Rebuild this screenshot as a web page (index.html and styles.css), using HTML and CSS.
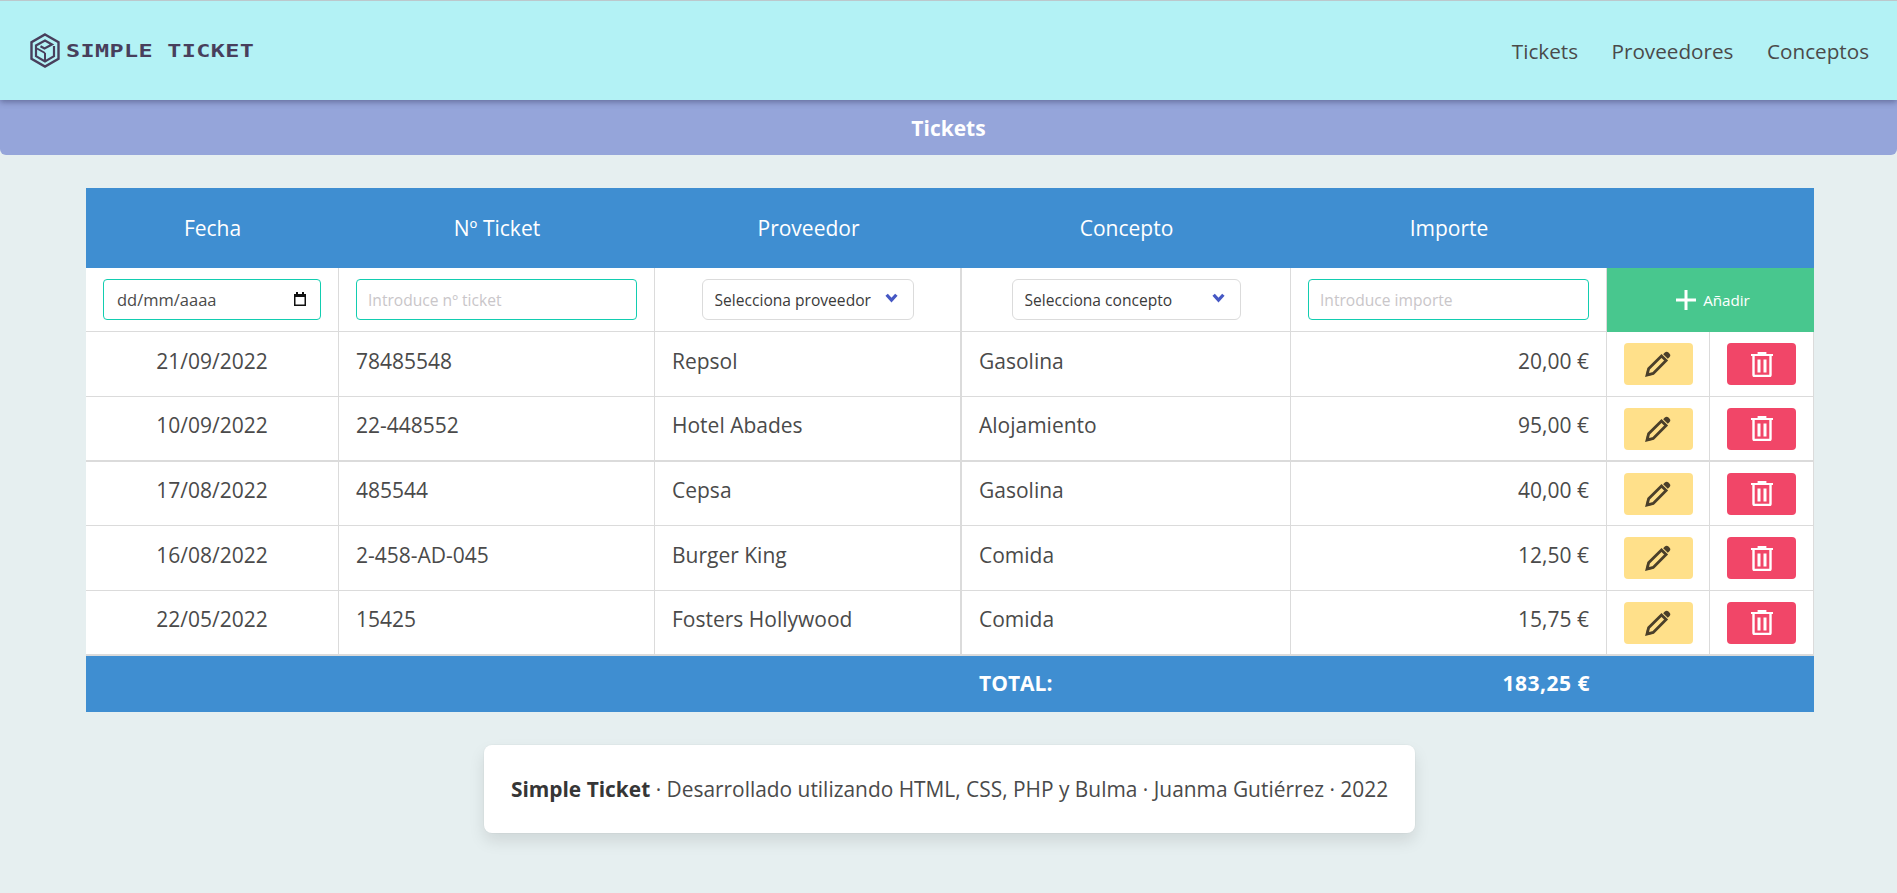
FILE: index.html
```html
<!DOCTYPE html>
<html lang="es">
<head>
<meta charset="utf-8">
<title>Simple Ticket</title>
<link rel="stylesheet" href="styles.css">
</head>
<body>
<nav class="navbar">
  <a class="brand" href="#">
    <svg class="brand-icon" viewBox="0 0 30 35" width="30" height="35" fill="none" stroke="#483f5c" stroke-width="2.400">
      <path d="M15 1.500 28.500 9.200v16.600L15 33.500 1.500 25.800V9.200z"/>
      <path d="M24 13v10.200L15 28.500 6 23.200V12.500L15 7.500l7 4-7.500 4-4-2.200" stroke-width="2.200"/>
      <path d="M7 15.500l8 4.500M15 20v8" stroke-width="2"/>
    </svg>
    <span class="brand-text">SIMPLE TICKET</span>
  </a>
  <div class="nav-links">
    <a href="#">Tickets</a>
    <a href="#">Proveedores</a>
    <a href="#">Conceptos</a>
  </div>
</nav>
<div class="subtitle">Tickets</div>
<main class="content">
  <table class="tickets">
    <colgroup>
      <col class="c1"><col class="c2"><col class="c3"><col class="c4"><col class="c5"><col class="c6"><col class="c7">
    </colgroup>
    <thead>
      <tr class="head">
        <th>Fecha</th><th>Nº Ticket</th><th>Proveedor</th><th>Concepto</th><th>Importe</th><th colspan="2"></th>
      </tr>
    </thead>
    <tbody>
      <tr class="filters">
        <td>
          <div class="date-wrap">
            <input class="input" type="text" value="dd/mm/aaaa" aria-label="Fecha">
            <svg class="cal" viewBox="0 0 14 14" width="14" height="14"><path d="M3 0h2v2h4V0h2v2h2v12H1V2h2zM2.500 5v7.500h9V5z" fill="#111"/></svg>
          </div>
        </td>
        <td><input class="input" type="text" placeholder="Introduce nº ticket"></td>
        <td class="center thick">
          <div class="select-wrap sel-a">
            <select class="select"><option>Selecciona proveedor</option></select>
            <svg class="chev" viewBox="0 0 12 9" width="13" height="10"><path d="M1.500 1.500 6 6.500l4.500-5" fill="none" stroke="#4658c4" stroke-width="3"/></svg>
          </div>
        </td>
        <td class="center">
          <div class="select-wrap sel-b">
            <select class="select"><option>Selecciona concepto</option></select>
            <svg class="chev" viewBox="0 0 12 9" width="13" height="10"><path d="M1.500 1.500 6 6.500l4.500-5" fill="none" stroke="#4658c4" stroke-width="3"/></svg>
          </div>
        </td>
        <td><input class="input" type="text" placeholder="Introduce importe"></td>
        <td class="add" colspan="2">
          <svg viewBox="0 0 20 20" width="20" height="20"><path d="M10 0v20M0 10h20" stroke="#fff" stroke-width="3"/></svg><span>Añadir</span>
        </td>
      </tr>
      <tr>
        <td class="date">21/09/2022</td><td>78485548</td><td class="thick">Repsol</td><td>Gasolina</td><td class="amount">20,00 €</td>
        <td class="act"><button class="btn edit" aria-label="Editar"><svg width="26" height="26"><use href="#pencil"/></svg></button></td>
        <td class="act"><button class="btn del" aria-label="Borrar"><svg width="22" height="25"><use href="#trash"/></svg></button></td>
      </tr>
      <tr class="heavy">
        <td class="date">10/09/2022</td><td>22-448552</td><td class="thick">Hotel Abades</td><td>Alojamiento</td><td class="amount">95,00 €</td>
        <td class="act"><button class="btn edit" aria-label="Editar"><svg width="26" height="26"><use href="#pencil"/></svg></button></td>
        <td class="act"><button class="btn del" aria-label="Borrar"><svg width="22" height="25"><use href="#trash"/></svg></button></td>
      </tr>
      <tr class="short">
        <td class="date">17/08/2022</td><td>485544</td><td class="thick">Cepsa</td><td>Gasolina</td><td class="amount">40,00 €</td>
        <td class="act"><button class="btn edit" aria-label="Editar"><svg width="26" height="26"><use href="#pencil"/></svg></button></td>
        <td class="act"><button class="btn del" aria-label="Borrar"><svg width="22" height="25"><use href="#trash"/></svg></button></td>
      </tr>
      <tr>
        <td class="date">16/08/2022</td><td>2-458-AD-045</td><td class="thick">Burger King</td><td>Comida</td><td class="amount">12,50 €</td>
        <td class="act"><button class="btn edit" aria-label="Editar"><svg width="26" height="26"><use href="#pencil"/></svg></button></td>
        <td class="act"><button class="btn del" aria-label="Borrar"><svg width="22" height="25"><use href="#trash"/></svg></button></td>
      </tr>
      <tr class="heavy">
        <td class="date">22/05/2022</td><td>15425</td><td class="thick">Fosters Hollywood</td><td>Comida</td><td class="amount">15,75 €</td>
        <td class="act"><button class="btn edit" aria-label="Editar"><svg width="26" height="26"><use href="#pencil"/></svg></button></td>
        <td class="act"><button class="btn del" aria-label="Borrar"><svg width="22" height="25"><use href="#trash"/></svg></button></td>
      </tr>
    </tbody>
    <tfoot>
      <tr class="foot">
        <td colspan="3"></td><td>TOTAL:</td><td class="amount sum">183,25 €</td><td colspan="2"></td>
      </tr>
    </tfoot>
  </table>
  <footer class="credit"><strong>Simple Ticket</strong> · Desarrollado utilizando HTML, CSS, PHP y Bulma · Juanma Gutiérrez · 2022</footer>
</main>
<svg class="defs" width="0" height="0" aria-hidden="true">
  <symbol id="pencil" viewBox="0 0 26 26">
    <path d="M2 24 3.600 17.800 16.500 4.900l4.600 4.600L8.200 22.400z" fill="none" stroke="#4a3f2a" stroke-width="2.800" stroke-linejoin="miter"/>
    <path d="M18.200 3.200 19.800 1.600a2.600 2.600 0 0 1 3.700 0l.9.900a2.600 2.600 0 0 1 0 3.700l-1.600 1.600z" fill="#4a3f2a"/>
    <path d="M1 25 2 19.500l4.500 4.500z" fill="#4a3f2a"/>
  </symbol>
  <symbol id="trash" viewBox="0 0 22 25">
    <path d="M0 3h22" stroke="#fff" stroke-width="2"/>
    <path d="M7.500 3V1h7v2" fill="none" stroke="#fff" stroke-width="1.800"/>
    <path d="M2.500 3v20a1 1 0 0 0 1 1h15a1 1 0 0 0 1-1V3" fill="none" stroke="#fff" stroke-width="2.400"/>
    <path d="M8 7.500v13M14 7.500v13" stroke="#fff" stroke-width="3"/>
  </symbol>
</svg>
</body>
</html>
```
FILE: styles.css
```css
* { box-sizing: border-box; }
html, body { margin: 0; height: 100%; }
body {
  background: #e6eff0;
  color: #4a4a4a;
  font-family: "Open Sans", "Noto Sans", sans-serif;
  font-size: 21px;
  overflow: hidden;
}
a { color: inherit; text-decoration: none; }
.defs { position: absolute; }

.navbar {
  position: relative;
  z-index: 2;
  height: 100px;
  border-top: 1px solid #bcc8cc;
  background: #b3f2f5;
  padding: 0 28px 0 30px;
  display: flex;
  align-items: center;
  justify-content: space-between;
  box-shadow: 0 2px 6px rgba(40, 40, 80, .45);
}
.brand { display: flex; align-items: center; gap: 6px; color: #483f5c; }
.brand-text {
  font-family: "DejaVu Sans Mono", monospace;
  font-weight: 700;
  font-size: 18px;
  letter-spacing: 0.3px;
  transform: scaleX(1.3);
  transform-origin: left center;
}
.nav-links { display: flex; gap: 33.500px; font-size: 20.700px; padding-top: 1px; }

.subtitle {
  height: 55px;
  background: #95a5da;
  color: #fff;
  font-weight: 700;
  text-align: center;
  line-height: 57px;
  border-radius: 0 0 6px 6px;
}

.content { padding: 33px 83px 0 86px; display: flex; flex-direction: column; align-items: center; }

.tickets {
  width: 1728px;
  table-layout: fixed;
  border-collapse: separate;
  border-spacing: 0;
  background: #fff;
}
.c1 { width: 253px; } .c2 { width: 316px; } .c3 { width: 307px; } .c4 { width: 329px; }
.c5 { width: 316px; } .c6 { width: 103px; } .c7 { width: 104px; }

.tickets td { height: 65px; padding: 0 17px 7px; border-right: 1px solid #dbdbdb; border-bottom: 1px solid #dbdbdb; }
.tickets td.thick { border-right-width: 2px; }
.tickets tr.heavy td { border-bottom-width: 2px; }
.tickets tr.short td { height: 64px; }

.head th { height: 80px; background: #3f8ed1; color: #fff; font-weight: 400; text-align: center; }
.tickets .filters td { height: 64px; padding-bottom: 0; }
.center { text-align: center; }

.input {
  display: block;
  width: 100%;
  height: 41px;
  border: 1px solid #12cdb0;
  border-radius: 4px;
  padding: 0 11px;
  font: inherit;
  font-size: 15.600px;
  color: #4a4a4a;
  background: #fff;
  outline: none;
}
.input::placeholder { color: #c9c6c9; opacity: 1; }
.date-wrap .input { font-size: 16.500px; padding-left: 13px; }
.date-wrap, .select-wrap { position: relative; }
.cal { position: absolute; right: 14px; top: 13px; }

.select-wrap { display: inline-block; vertical-align: middle; }
.sel-a { width: 212px; }
.sel-b { width: 229px; }
.select {
  display: block;
  width: 100%;
  height: 41px;
  appearance: none;
  border: 1px solid #dbdbdb;
  border-radius: 6px;
  padding: 0 12px;
  background: #fff;
  color: #3a3a3a;
  font: inherit;
  font-size: 15.600px;
}
.chev { position: absolute; right: 16px; top: 14px; pointer-events: none; }

.tickets td.add {
  background: #48c78e;
  color: #fff;
  text-align: center;
  font-size: 15.200px;
  border: 0;
  padding: 0 0 0 5px;
}
.add svg { vertical-align: -4px; margin-right: 7px; }

.date { text-align: center; }
.amount { text-align: right; }
.tickets td.act { padding: 0; text-align: center; }
.btn {
  display: inline-flex;
  align-items: center;
  justify-content: center;
  width: 69px;
  height: 42px;
  border: 0;
  border-radius: 4px;
  padding: 0;
  vertical-align: middle;
}
.edit { background: #ffe08a; }
.del { background: #f14668; }

.tickets .foot td {
  height: 56px;
  padding-bottom: 2px;
  background: #3f8ed1;
  color: #fff;
  font-weight: 700;
  border: 0;
}
.tickets .foot .sum { letter-spacing: 0.5px; }

.credit {
  width: 931px;
  height: 88px;
  margin-top: 33px;
  margin-right: 1px;
  background: #fff;
  border-radius: 8px;
  box-shadow: 0 8px 16px rgba(10, 10, 10, .1), 0 0 0 1px rgba(10, 10, 10, .02);
  display: flex;
  align-items: center;
  justify-content: center;
  white-space: pre;
  font-size: 20.900px;
}
.credit strong { color: #363636; font-weight: 700; }
```
